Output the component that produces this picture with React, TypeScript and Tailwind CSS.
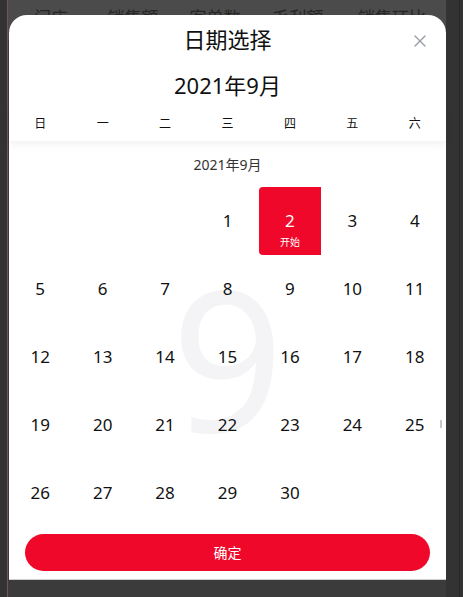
import React from 'react';
import { X } from 'lucide-react';

const weekDays = ['日', '一', '二', '三', '四', '五', '六'];
const headers = [
  { label: '门店', w: 'w-[86px]' },
  { label: '销售额', w: 'w-[78px]' },
  { label: '客单数', w: 'w-[86px]' },
  { label: '毛利额', w: 'w-[80px]' },
  { label: '销售环比', w: 'w-[108px]' },
];

// Sept 2021 starts on Wednesday
const cells: (number | null)[] = [null, null, null, ...Array.from({ length: 30 }, (_, i) => i + 1)];

export default function App() {
  return (
    <div
      className="flex w-[463px] h-[597px] bg-[#333333] overflow-hidden"
      style={{ fontFamily: '"Noto Sans", "Noto Sans CJK SC", sans-serif' }}
    >
      <div className="w-[8px] shrink-0 border-r border-[#7a4f55]" />

      {/* Phone area */}
      <div className="relative w-[438px] h-full shrink-0 bg-[#3b3b3b]">
        {/* page behind the mask */}
        <div className="h-[40px] bg-[#4b4b4b] flex items-start pt-[5px] text-[17px] text-[#262626]">
          {headers.map((h) => (
            <div key={h.label} className={`${h.w} text-center`}>
              {h.label}
            </div>
          ))}
        </div>

        {/* Bottom sheet */}
        <div className="absolute left-[1px] right-0 top-[15px] h-[565px] bg-white rounded-t-[18px] border-b border-[#cfcfcf] flex flex-col">
          <div className="relative h-[48px] flex items-center justify-center text-[22px] text-[#111]">
            日期选择
            <X className="absolute right-[16px] top-[16px] w-[20px] h-[20px] text-[#9aa0a6]" strokeWidth={1.6} />
          </div>
          <div className="h-[44px] flex items-center justify-center text-[22px] text-[#111]">2021年9月</div>
          <div className="h-[34px] grid grid-cols-7 items-center text-[12px] text-[#111] shadow-[0_4px_8px_rgba(0,0,0,0.05)] z-10">
            {weekDays.map((d) => (
              <div key={d} className="text-center">
                {d}
              </div>
            ))}
          </div>

          <div className="relative flex-1">
            <div className="h-[46px] flex items-center justify-center text-[14px] text-[#333]">2021年9月</div>
            <div className="relative">
              <div
                aria-hidden
                className="absolute inset-0 flex items-center justify-center text-[196px] leading-none text-[#f4f4f6] select-none pb-[2px]"
              >
                9
              </div>
              <div className="relative grid grid-cols-7">
                {cells.map((d, i) => {
                  const active = d === 2;
                  return (
                    <div
                      key={i}
                      className={
                        active
                          ? 'relative h-[68px] flex items-center justify-center bg-[#f0082a] text-white rounded-l-[4px] text-[17px]'
                          : 'relative h-[68px] flex items-center justify-center text-[#111] text-[17px]'
                      }
                    >
                      {d}
                      {active && (
                        <span className="absolute bottom-[7px] left-0 right-0 text-center text-[10px] leading-[12px]">开始</span>
                      )}
                    </div>
                  );
                })}
              </div>
            </div>
            <div className="absolute right-[4px] top-[279px] w-[2px] h-[8px] bg-[#c8c8c8]" />
          </div>

          <div className="px-[16px] pb-[8px] pt-[6px]">
            <button className="w-full h-[37px] rounded-full bg-[#f0082a] text-white text-[14px]">确定</button>
          </div>
        </div>
      </div>

      <div className="flex-1 border-r border-[#262626] mr-[3px]" />
    </div>
  );
}
